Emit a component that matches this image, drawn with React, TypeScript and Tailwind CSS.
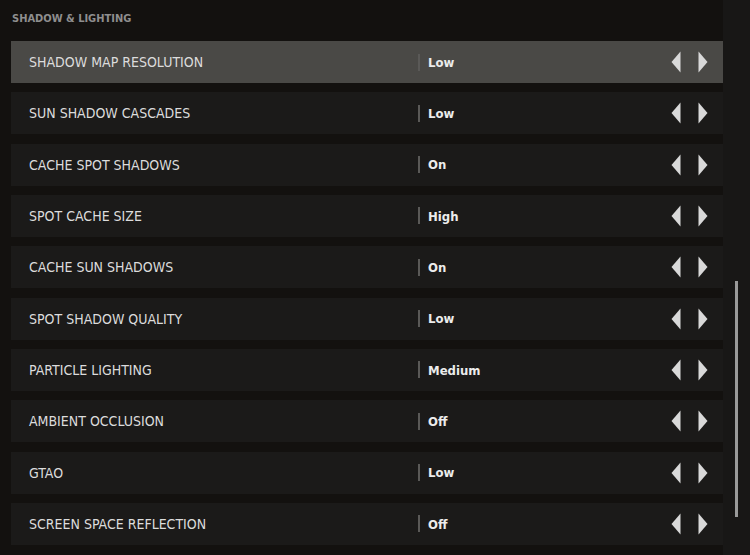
import React from "react";

const rows: { label: string; value: string; active?: boolean }[] = [
  { label: "SHADOW MAP RESOLUTION", value: "Low", active: true },
  { label: "SUN SHADOW CASCADES", value: "Low" },
  { label: "CACHE SPOT SHADOWS", value: "On" },
  { label: "SPOT CACHE SIZE", value: "High" },
  { label: "CACHE SUN SHADOWS", value: "On" },
  { label: "SPOT SHADOW QUALITY", value: "Low" },
  { label: "PARTICLE LIGHTING", value: "Medium" },
  { label: "AMBIENT OCCLUSION", value: "Off" },
  { label: "GTAO", value: "Low" },
  { label: "SCREEN SPACE REFLECTION", value: "Off" },
];

const font = { fontFamily: '"DejaVu Sans Condensed", "Liberation Sans", sans-serif' };

function Arrows() {
  return (
    <div className="flex items-center gap-[17px]">
      <svg width="10" height="22" viewBox="0 0 10 22">
        <path d="M9.5 0.5 L9.5 21.5 L0.5 11 Z" fill="#d9d9d9" />
      </svg>
      <svg width="10" height="22" viewBox="0 0 10 22">
        <path d="M0.5 0.5 L0.5 21.5 L9.5 11 Z" fill="#d9d9d9" />
      </svg>
    </div>
  );
}

export default function App() {
  return (
    <div className="w-[750px] h-[555px] overflow-hidden bg-[#13110f] flex" style={font}>
      <div className="ml-[11px] w-[712px] flex flex-col">
        <div className="h-[41px] pl-[1px] pt-[12px] text-[11px] font-bold text-[#8e8e8e] leading-[13px]">
          SHADOW &amp; LIGHTING
        </div>
        <div className="flex flex-col gap-[9.33px]">
          {rows.map((r) => (
            <div
              key={r.label}
              className={`h-[42px] shrink-0 flex items-center pl-[18px] pr-[15px] ${
                r.active ? "bg-[#4a4946]" : "bg-[#1b1a19]"
              }`}
            >
              <div className="w-[389px] pt-[1px] text-[14px] text-[#dcdcdc]">{r.label}</div>
              <div className="w-[2px] h-[17px] bg-[#5a5957]" />
              <div className="flex-1 pl-[8px] pt-[1px] text-[13px] font-bold text-[#ececec]">{r.value}</div>
              <Arrows />
            </div>
          ))}
        </div>
      </div>
      <div className="flex-1 flex justify-center bg-[#181716]">
        <div className="mt-[281px] w-[3px] h-[236px] bg-[#9a9a9a]" />
      </div>
    </div>
  );
}
